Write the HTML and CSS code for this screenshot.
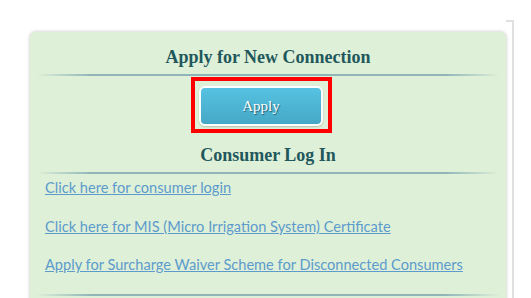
FILE: index.html
```html
<!DOCTYPE html>
<html>
<head>
<meta charset="utf-8">
<link rel="stylesheet" href="styles.css">
</head>
<body>
<div class="page">
  <div class="card">
    <h2 class="title">Apply for New Connection</h2>
    <div class="divider"></div>
    <div class="apply-row">
      <div class="highlight">
        <a class="btn" href="#">Apply</a>
      </div>
    </div>
    <h2 class="title title-login">Consumer Log In</h2>
    <div class="divider"></div>
    <div class="links">
      <a class="link" href="#">Click here for consumer login</a>
      <a class="link" href="#">Click here for MIS (Micro Irrigation System) Certificate</a>
      <a class="link" href="#">Apply for Surcharge Waiver Scheme for Disconnected Consumers</a>
    </div>
    <div class="divider divider-bottom"></div>
  </div>
  <div class="decor"></div>
</div>
</body>
</html>
```

FILE: styles.css
```css
html, body {
  margin: 0;
  padding: 0;
  background: #ffffff;
}

.page {
  display: flex;
  align-items: flex-start;
  padding-top: 20px;
  height: 278px;
  overflow: hidden;
}

.card {
  margin-left: 30px;
  margin-top: 12px;
  width: 476px;
  background: #dff0d8;
  border-radius: 6px;
  box-shadow: 0 0 3px 1px rgba(0, 0, 0, 0.16);
  padding-bottom: 20px;
}

.decor {
  width: 6px;
  height: 300px;
  border-top: 2px solid #e0e0e0;
  border-right: 2px solid #e0e0e0;
}

.title {
  margin: 0;
  padding-top: 14px;
  font-family: "Liberation Serif", "Times New Roman", serif;
  font-size: 18px;
  line-height: 22px;
  font-weight: bold;
  color: #1f585c;
  text-align: center;
}

.title-login {
  padding-top: 11px;
}

.divider {
  margin: 6px 6px 0 6px;
  height: 2px;
  background: linear-gradient(to right, rgba(143, 181, 184, 0), #8fb5b8 12%, #8fb5b8 88%, rgba(143, 181, 184, 0));
}

.apply-row {
  display: flex;
  justify-content: center;
  padding-right: 13px;
  margin-top: 1px;
}

.highlight {
  border: 4px solid #ff0000;
  padding: 5px 5px 3px 4px;
}

.btn {
  display: block;
  width: 120px;
  height: 36px;
  box-sizing: content-box;
  border: 2px solid #ffffff;
  border-radius: 6px;
  box-shadow: 0 1px 2px rgba(0, 0, 0, 0.2);
  background: linear-gradient(to bottom, #57c2e2, #45a8c6);
  color: #ffffff;
  font-family: "Liberation Serif", "Times New Roman", serif;
  font-size: 15px;
  line-height: 36px;
  text-align: center;
  text-decoration: none;
  text-shadow: 1px 1px 1px rgba(0, 40, 60, 0.6);
}

.links {
  display: flex;
  flex-direction: column;
  align-items: flex-start;
  gap: 18.5px;
  padding: 4px 0 0 15px;
}

.link {
  font-family: Lato, "Open Sans", sans-serif;
  font-size: 14.6px;
  line-height: 20px;
  color: #5c9bcc;
  text-decoration: underline;
}

.divider-bottom {
  margin-top: 19px;
}
```
